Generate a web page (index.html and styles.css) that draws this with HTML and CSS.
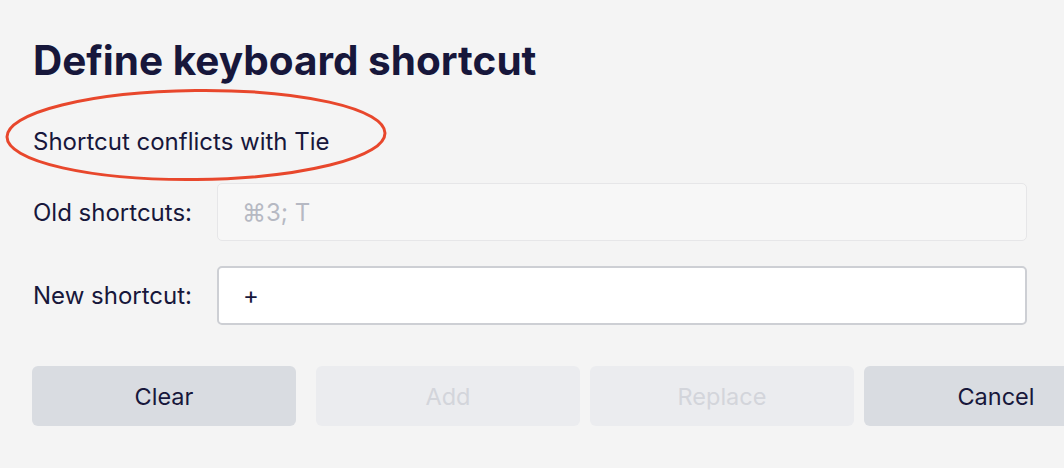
FILE: index.html
```html
<!DOCTYPE html>
<html>
<head>
<meta charset="utf-8">
<link rel="stylesheet" href="styles.css">
</head>
<body>
<div class="dialog">
  <h1 class="title">Define keyboard shortcut</h1>
  <div class="conflict">
    <span>Shortcut conflicts with Tie</span>
    <svg class="circle" width="400" height="100" viewBox="0 0 400 100">
      <ellipse cx="200" cy="50" rx="189" ry="44.5" fill="none" stroke="#e8472c" stroke-width="3" transform="rotate(-0.6 200 50)"/>
    </svg>
  </div>
  <div class="form">
    <div class="row">
      <label class="label">Old shortcuts:</label>
      <div class="field field-old">⌘3; T</div>
    </div>
    <div class="row">
      <label class="label">New shortcut:</label>
      <div class="field field-new">+</div>
    </div>
  </div>
  <div class="buttons">
    <button class="btn">Clear</button>
    <button class="btn btn-disabled">Add</button>
    <button class="btn btn-disabled">Replace</button>
    <button class="btn">Cancel</button>
  </div>
</div>
</body>
</html>
```

FILE: styles.css
```css
html, body {
  margin: 0;
  padding: 0;
  background: #f4f4f4;
  overflow: hidden;
}
body {
  width: 1064px;
  height: 468px;
  font-family: Inter, "Noto Sans", sans-serif;
  color: #17173b;
}
.dialog {
  padding: 37px 0 0 33px;
  width: 1200px;
}
.title {
  margin: 0;
  font-size: 40.5px;
  font-weight: 700;
  line-height: 48px;
}
.conflict {
  position: relative;
  margin-top: 42px;
  font-size: 24px;
  line-height: 29px;
  height: 29px;
}
.circle {
  position: absolute;
  left: -37.5px;
  top: -42px;
}
.form {
  margin-top: 27px;
  width: 994px;
  display: flex;
  flex-direction: column;
  gap: 25px;
}
.row {
  display: flex;
  align-items: center;
  gap: 25px;
}
.label {
  font-size: 24px;
  line-height: 29px;
}
.field {
  flex: 1;
  height: 58px;
  box-sizing: border-box;
  border-radius: 5px;
  display: flex;
  align-items: center;
  padding-left: 24px;
  font-size: 24px;
}
.field-old {
  background: #f7f7f7;
  border: 1px solid #e6e6e8;
  color: #b6b9c3;
}
.field-new {
  height: 59px;
  background: #ffffff;
  border: 2px solid #cdcfd4;
  color: #17173b;
}
.buttons {
  margin-top: 41px;
  display: flex;
  gap: 10px;
  margin-left: -1px;
}
.btn {
  width: 264px;
  height: 60px;
  border: none;
  border-radius: 6px;
  background: #d9dce1;
  color: #17173b;
  font-family: Inter, "Noto Sans", sans-serif;
  font-size: 23.5px;
  padding: 0;
}
.btn:first-child {
  margin-right: 10px;
}
.btn-disabled {
  background: #ebecef;
  color: #d3d5db;
}
```
